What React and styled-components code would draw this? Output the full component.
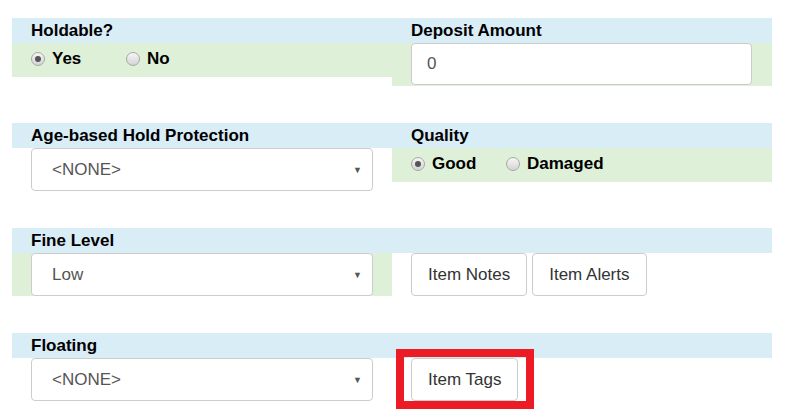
import React from "react";
import styled, { createGlobalStyle } from "styled-components";

const GlobalStyle = createGlobalStyle`
  html, body {
    margin: 0;
    background: #fff;
    font-family: "Liberation Sans", Arial, sans-serif;
  }
`;

const Page = styled.div`
  min-height: 417px;
  box-sizing: border-box;
  padding: 18px 0 16px 12px;
`;

// Two columns, one row every 105px
const FormGrid = styled.div`
  display: grid;
  grid-template-columns: 380px 380px;
  grid-template-rows: repeat(3, 105px) auto;
`;

const Cell = styled.div`
  display: flex;
  flex-direction: column;
  align-items: stretch;
`;

const Label = styled.div`
  height: 25px;
  line-height: 26px;
  padding-left: 19px;
  background: #d9edf7;
  font-size: 17px;
  font-weight: bold;
  color: #000;
`;

const Body = styled.div`
  display: flex;
  align-items: ${(p) => p.$align || "center"};
  gap: 5px;
  padding: ${(p) => (p.$radios ? "6px 19px 0" : "0 19px")};
  min-height: ${(p) => p.$height || 43}px;
  box-sizing: border-box;
  background: ${(p) => (p.$green ? "#dff0d8" : "transparent")};
`;

const RadioLabel = styled.label`
  display: flex;
  align-items: center;
  gap: 7px;
  width: 90px;
  font-size: 17px;
  font-weight: bold;
  color: #000;
`;

const RadioDot = styled.span`
  width: 14px;
  height: 14px;
  flex: none;
  border-radius: 50%;
  border: 1px solid #a8a8a8;
  box-sizing: border-box;
  background: linear-gradient(#f6f6f6, #d4d4d4);
  display: inline-flex;
  align-items: center;
  justify-content: center;

  &::after {
    content: "";
    width: 6px;
    height: 6px;
    border-radius: 50%;
    background: ${(p) => (p.$checked ? "#555" : "transparent")};
  }
`;

const Select = styled.div`
  width: 342px;
  height: 43px;
  box-sizing: border-box;
  border: 1px solid #ccc;
  border-radius: 4px;
  background: #fff;
  display: flex;
  align-items: center;
  justify-content: space-between;
  padding: 0 10px 0 20px;
  font-size: 17px;
  color: #555;
`;

const Caret = styled.span`
  font-size: 9px;
  color: #555;
`;

const Input = styled.div`
  width: 341px;
  height: 42px;
  box-sizing: border-box;
  border: 1px solid #ccc;
  border-radius: 4px;
  background: #fff;
  display: flex;
  align-items: center;
  padding-left: 15px;
  font-size: 17px;
  color: #555;
`;

const Button = styled.button`
  height: 43px;
  padding: 0 16px;
  border: 1px solid #ccc;
  border-radius: 4px;
  background: #fff;
  font-family: "Liberation Sans", Arial, sans-serif;
  font-size: 17px;
  color: #333;
`;

const Highlight = styled.span`
  position: relative;
  display: inline-flex;

  &::after {
    content: "";
    position: absolute;
    top: -9px;
    bottom: -8px;
    left: -15px;
    right: -16px;
    border: 8px solid #ed1c24;
    pointer-events: none;
  }
`;

const Radio = ({ checked, children }) => (
  <RadioLabel>
    <RadioDot $checked={checked} />
    {children}
  </RadioLabel>
);

const Dropdown = ({ value }) => (
  <Select>
    {value}
    <Caret>▼</Caret>
  </Select>
);

export default function App() {
  return (
    <Page>
      <GlobalStyle />
      <FormGrid>
        <Cell>
          <Label>Holdable?</Label>
          <Body $green $radios $align="flex-start" $height={34}>
            <Radio checked>Yes</Radio>
            <Radio>No</Radio>
          </Body>
        </Cell>
        <Cell>
          <Label>Deposit Amount</Label>
          <Body $green $align="flex-start">
            <Input>0</Input>
          </Body>
        </Cell>

        <Cell>
          <Label>Age-based Hold Protection</Label>
          <Body>
            <Dropdown value="<NONE>" />
          </Body>
        </Cell>
        <Cell>
          <Label>Quality</Label>
          <Body $green $radios $align="flex-start" $height={34}>
            <Radio checked>Good</Radio>
            <Radio>Damaged</Radio>
          </Body>
        </Cell>

        <Cell>
          <Label>Fine Level</Label>
          <Body $green>
            <Dropdown value="Low" />
          </Body>
        </Cell>
        <Cell>
          <Label>&nbsp;</Label>
          <Body>
            <Button>Item Notes</Button>
            <Button>Item Alerts</Button>
          </Body>
        </Cell>

        <Cell>
          <Label>Floating</Label>
          <Body>
            <Dropdown value="<NONE>" />
          </Body>
        </Cell>
        <Cell>
          <Label>&nbsp;</Label>
          <Body>
            <Highlight>
              <Button>Item Tags</Button>
            </Highlight>
          </Body>
        </Cell>
      </FormGrid>
    </Page>
  );
}
